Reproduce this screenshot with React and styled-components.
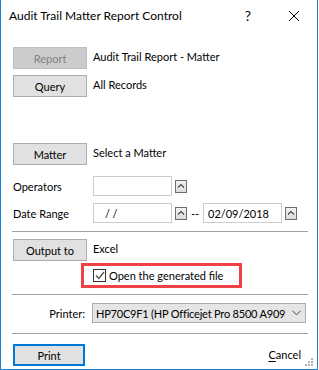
import React from "react";
import styled, { createGlobalStyle } from "styled-components";

const Global = createGlobalStyle`
  html, body {
    margin: 0;
    padding: 0;
    background: #ffffff;
  }
  body {
    font-family: Lato, "Noto Sans", sans-serif;
    font-size: 11px;
    color: #000;
  }
`;

const Window = styled.div`
  box-sizing: border-box;
  width: 318px;
  height: 370px;
  border: 1px solid #1883d7;
  border-top: none;
  background: #fff;
  display: flex;
  flex-direction: column;
  position: relative;
`;

const TitleBar = styled.div`
  height: 31px;
  display: flex;
  align-items: center;
  padding-left: 8px;
  font-size: 12px;
`;

const Title = styled.div`
  flex: 1;
`;

const TitleButton = styled.div`
  width: 46px;
  height: 31px;
  display: flex;
  align-items: center;
  justify-content: center;
  font-size: 14px;
`;

const Body = styled.div`
  display: flex;
  flex-direction: column;
  padding: 0 10px 0 12px;
`;

const Row = styled.div`
  display: flex;
  align-items: center;
  margin-top: ${(p) => p.$top || 0}px;
  height: ${(p) => p.$h || 22}px;
`;

const Button = styled.div`
  box-sizing: border-box;
  width: ${(p) => p.$w || 74}px;
  height: 22px;
  display: flex;
  align-items: center;
  justify-content: center;
  background: ${(p) => (p.$disabled ? "#cccccc" : "#e1e1e1")};
  border: ${(p) =>
    p.$default ? "2px solid #0078d7" : p.$disabled ? "1px solid #bfbfbf" : "1px solid #adadad"};
  color: ${(p) => (p.$disabled ? "#838383" : "#000")};
  flex-shrink: 0;
`;

const Value = styled.div`
  margin-left: 6px;
  margin-top: -3px;
`;

const Label = styled.div`
  width: 80px;
  flex-shrink: 0;
`;

const Field = styled.div`
  box-sizing: border-box;
  width: 79px;
  height: 20px;
  border: 1px solid #cccccc;
  display: flex;
  align-items: center;
  letter-spacing: ${(p) => (p.$spaced ? "5px" : "0")};
  padding-left: ${(p) => (p.$spaced ? "11px" : "4px")};
`;

const Spin = styled.div`
  box-sizing: border-box;
  width: 12px;
  height: 13px;
  margin-left: 3px;
  border: 1px solid #6d6d6d;
  background: linear-gradient(#f2f2f2, #dcdcdc);
  display: flex;
  align-items: center;
  justify-content: center;
`;

const Dash = styled.div`
  width: 16px;
  text-align: center;
`;

const Separator = styled.div`
  height: 1px;
  background: #a0a0a0;
  margin: ${(p) => p.$top || 0}px -1px 0 -1px;
`;

const Highlight = styled.div`
  box-sizing: border-box;
  width: 161px;
  height: 25px;
  margin-left: 68px;
  border: 3px solid #ef4146;
  display: flex;
  align-items: center;
  padding-left: 9px;
  white-space: nowrap;
`;

const Check = styled.div`
  box-sizing: border-box;
  width: 13px;
  height: 13px;
  border: 1px solid #333;
  background: #fff;
  margin-right: 3px;
  display: flex;
  align-items: center;
  justify-content: center;
`;

const PrinterLabel = styled.div`
  width: 72px;
  text-align: right;
  padding-right: 7px;
  flex-shrink: 0;
`;

const Select = styled.div`
  box-sizing: border-box;
  width: 214px;
  height: 20px;
  background: #e5e5e5;
  border: 1px solid #adadad;
  display: flex;
  align-items: center;
  padding-left: 3px;
  overflow: hidden;
  white-space: nowrap;
`;

const SelectText = styled.div`
  flex: 1;
  overflow: hidden;
  letter-spacing: -0.2px;
`;

const Chevron = styled.div`
  width: 18px;
  display: flex;
  justify-content: center;
`;

const Footer = styled.div`
  display: flex;
  align-items: center;
  justify-content: space-between;
  margin-top: 10px;
  padding-right: 6px;
`;

const LinkText = styled.div`
  margin-top: -2px;
  u {
    text-decoration: underline;
    text-underline-offset: 2px;
  }
`;

const Grip = styled.svg`
  position: absolute;
  right: 3px;
  bottom: 2px;
`;

const UpArrow = () => (
  <svg width="8" height="6" viewBox="0 0 8 6">
    <path d="M1 4.5 L4 1.5 L7 4.5" fill="none" stroke="#444" strokeWidth="1.1" />
  </svg>
);

export default function App() {
  return (
    <>
      <Global />
      <Window>
        <TitleBar>
          <Title>Audit Trail Matter Report Control</Title>
          <TitleButton>?</TitleButton>
          <TitleButton>
            <svg width="12" height="12" viewBox="0 0 12 12">
              <path d="M1 1 L11 11 M11 1 L1 11" stroke="#000" strokeWidth="1" />
            </svg>
          </TitleButton>
        </TitleBar>
        <Body>
          <Row $top={16}>
            <Button $disabled>Report</Button>
            <Value>Audit Trail Report - Matter</Value>
          </Row>
          <Row $top={6}>
            <Button>Query</Button>
            <Value>All Records</Value>
          </Row>
          <Row $top={46}>
            <Button>Matter</Button>
            <Value>Select a Matter</Value>
          </Row>
          <Row $top={11} $h={20}>
            <Label>Operators</Label>
            <Field />
            <Spin><UpArrow /></Spin>
          </Row>
          <Row $top={7} $h={20}>
            <Label>Date Range</Label>
            <Field $spaced>//</Field>
            <Spin><UpArrow /></Spin>
            <Dash>--</Dash>
            <Field>02/09/2018</Field>
            <Spin><UpArrow /></Spin>
          </Row>
          <Separator $top={8} />
          <Row $top={7}>
            <Button>Output to</Button>
            <Value>Excel</Value>
          </Row>
          <Row $top={2} $h={25}>
            <Highlight>
              <Check>
                <svg width="10" height="9" viewBox="0 0 10 9">
                  <path d="M1 4.5 L3.8 7.5 L9 1" fill="none" stroke="#555" strokeWidth="1.4" />
                </svg>
              </Check>
              Open the generated file
            </Highlight>
          </Row>
          <Separator $top={6} />
          <Row $top={8} $h={20}>
            <PrinterLabel>Printer:</PrinterLabel>
            <Select>
              <SelectText>HP70C9F1 (HP Officejet Pro 8500 A909</SelectText>
              <Chevron>
                <svg width="9" height="6" viewBox="0 0 9 6">
                  <path d="M0.5 0.8 L4.5 4.8 L8.5 0.8" fill="none" stroke="#444" strokeWidth="1" />
                </svg>
              </Chevron>
            </Select>
          </Row>
          <Separator $top={10} />
          <Footer>
            <Button $default $w={72}>Print</Button>
            <LinkText>
              <u>C</u>ancel
            </LinkText>
          </Footer>
        </Body>
        <Grip width="9" height="9" viewBox="0 0 9 9">
          <g fill="#b0b0b0">
            <rect x="6" y="0" width="2" height="2" />
            <rect x="3" y="3" width="2" height="2" />
            <rect x="6" y="3" width="2" height="2" />
            <rect x="0" y="6" width="2" height="2" />
            <rect x="3" y="6" width="2" height="2" />
            <rect x="6" y="6" width="2" height="2" />
          </g>
        </Grip>
      </Window>
    </>
  );
}
